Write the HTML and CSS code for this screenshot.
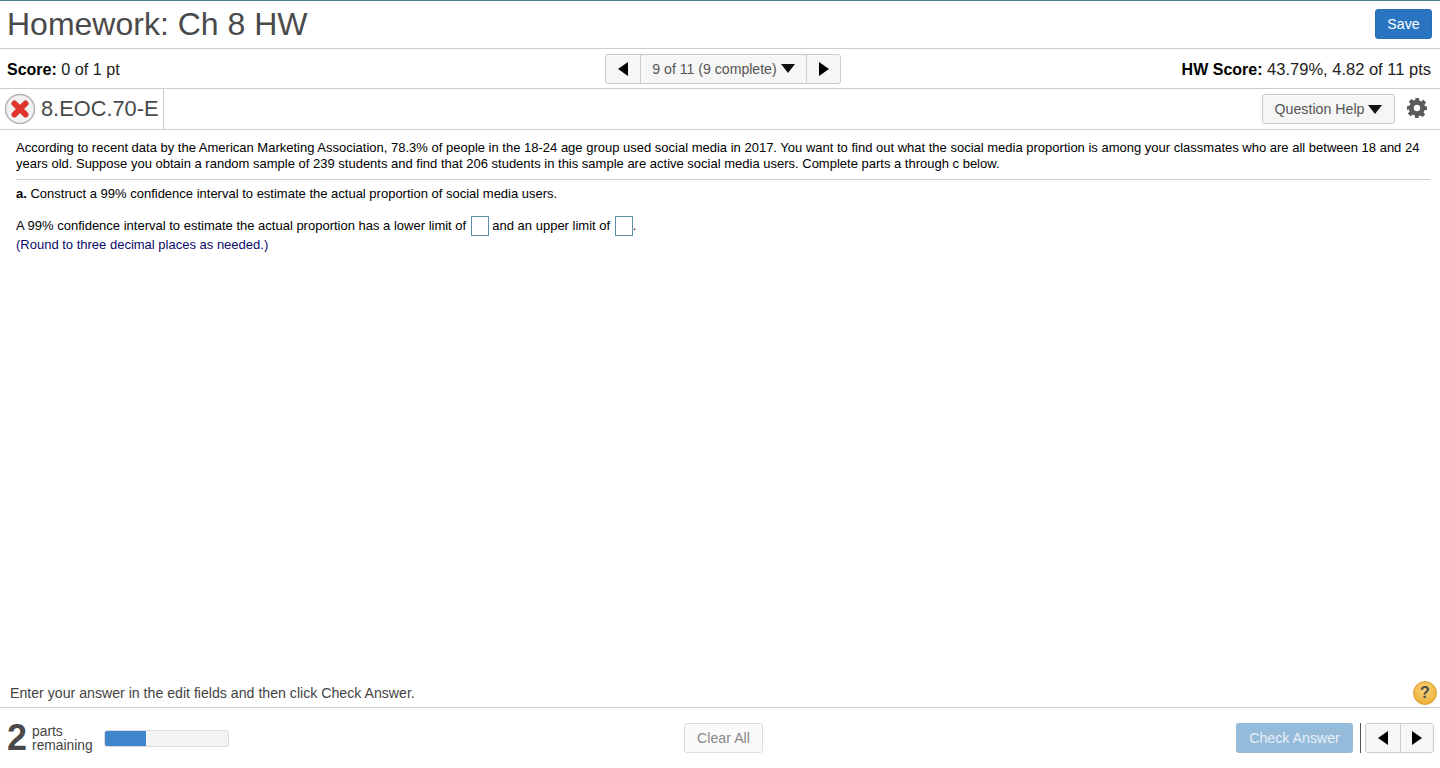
FILE: index.html
```html
<!DOCTYPE html>
<html lang="en">
<head>
  <meta charset="UTF-8" />
  <title>Homework: Ch 8 HW</title>
  <link rel="stylesheet" href="styles.css">
</head>
<body>

<header class="title-bar">
  <h1>Homework: Ch 8 HW</h1>
  <button class="btn btn-save">Save</button>
</header>

<div class="score-bar">
  <div class="score"><strong>Score:</strong> 0 of 1 pt</div>
  <div class="pager pager-main">
    <button class="pager-arrow"><span class="tri-left"></span></button>
    <button class="pager-label">9 of 11 (9 complete)<span class="tri-down"></span></button>
    <button class="pager-arrow"><span class="tri-right"></span></button>
  </div>
  <div class="hw-score"><strong>HW Score:</strong> 43.79%, 4.82 of 11 pts</div>
</div>

<div class="question-bar">
  <div class="question-id">
    <svg class="wrong-icon" width="32" height="32" viewBox="0 0 32 32">
      <circle cx="16" cy="16" r="14.5" fill="#f1f1f1" stroke="#b4b4b4" stroke-width="1.5"/>
      <path d="M10.5 10.5 L21.5 21.5 M21.5 10.5 L10.5 21.5" stroke="#dd352e" stroke-width="6" stroke-linecap="round"/>
    </svg>
    <span class="question-name">8.EOC.70-E</span>
  </div>
  <div class="question-tools">
    <button class="btn btn-help">Question Help<span class="tri-down"></span></button>
    <svg class="gear" width="22" height="22" viewBox="0 0 24 24">
      <path fill="#5a5a5a" fill-rule="evenodd" d="M10 1h4l.6 3.1 1.9.8 2.6-1.8 2.8 2.8-1.8 2.6.8 1.9L23 10v4l-3.1.6-.8 1.9 1.8 2.6-2.8 2.8-2.6-1.8-1.9.8L14 23h-4l-.6-3.1-1.9-.8-2.6 1.8-2.8-2.8 1.8-2.6-.8-1.9L1 14v-4l3.1-.6.8-1.9-1.8-2.6 2.8-2.8 2.6 1.8 1.9-.8zM12 8.5a3.5 3.5 0 1 0 0 7 3.5 3.5 0 0 0 0-7z"/>
    </svg>
  </div>
</div>

<main class="content">
  <p class="intro">According to recent data by the American Marketing Association, 78.3% of people in the 18-24 age group used social media in 2017. You want to find out what the social media proportion is among your classmates who are all between 18 and 24 years old. Suppose you obtain a random sample of 239 students and find that 206 students in this sample are active social media users. Complete parts a through c below.</p>
  <p class="part"><strong>a.</strong> Construct a 99% confidence interval to estimate the actual proportion of social media users.</p>
  <p class="answer">A 99% confidence interval to estimate the actual proportion has a lower limit of <span class="blank"></span> and an upper limit of <span class="blank"></span>.</p>
  <p class="hint">(Round to three decimal places as needed.)</p>
</main>

<div class="instruction-bar">
  <span>Enter your answer in the edit fields and then click Check Answer.</span>
  <span class="help-dot">?</span>
</div>

<footer class="action-bar">
  <div class="parts">
    <span class="parts-num">2</span>
    <span class="parts-text">parts<br>remaining</span>
    <div class="progress"><div class="progress-fill"></div></div>
  </div>
  <button class="btn btn-clear">Clear All</button>
  <div class="actions">
    <button class="btn btn-check">Check Answer</button>
    <span class="divider"></span>
    <div class="pager pager-small">
      <button class="pager-arrow"><span class="tri-left"></span></button>
      <button class="pager-arrow"><span class="tri-right"></span></button>
    </div>
  </div>
</footer>

</body>
</html>
```

FILE: styles.css
```css
* {
  box-sizing: border-box;
}

html, body {
  margin: 0;
  padding: 0;
  height: 100%;
  overflow: hidden;
}

body {
  display: flex;
  flex-direction: column;
  font-family: "Liberation Sans", Arial, sans-serif;
  color: #000;
  background: #fff;
}

button {
  font-family: inherit;
}

strong {
  font-weight: bold;
}

.title-bar {
  height: 49px;
  flex: none;
  display: flex;
  align-items: center;
  justify-content: space-between;
  padding: 0 8px 0 7px;
  border-top: 1px solid #4d7d96;
  border-bottom: 1px solid #ccc;
}

.title-bar h1 {
  margin: 0;
  font-size: 32px;
  font-weight: normal;
  color: #4a4a4a;
}

.btn {
  border-radius: 3px;
  font-size: 14.2px;
  cursor: pointer;
}

.btn-save {
  width: 57px;
  height: 30px;
  margin-bottom: 2px;
  padding: 0;
  background: #2a75c2;
  border: 1px solid #2a6fb5;
  color: #fff;
}

.score-bar {
  height: 40px;
  flex: none;
  display: grid;
  grid-template-columns: 1fr auto 1fr;
  align-items: center;
  padding: 0 9px 0 7px;
  border-bottom: 1px solid #ccc;
  font-size: 16.5px;
  color: #222;
}

.score, .hw-score {
  padding-top: 2px;
}

.score {
  font-size: 16.2px;
}

.score-bar strong {
  color: #000;
  font-size: 16px;
}

.hw-score {
  text-align: right;
}

.pager {
  display: flex;
  height: 30px;
  border: 1px solid #ccc;
  border-radius: 3px;
  background: #f6f6f6;
}

.pager-main {
  margin-left: 8px;
}

.pager button {
  background: none;
  border: none;
  padding: 0;
  display: flex;
  align-items: center;
  justify-content: center;
}

.pager-arrow {
  width: 34px;
}

.pager-arrow + .pager-label,
.pager-label + .pager-arrow,
.pager-arrow + .pager-arrow {
  border-left: 1px solid #ccc;
}

.pager-label {
  width: 166px;
  font-size: 14.1px;
  color: #555;
}

.tri-left, .tri-right, .tri-down {
  display: inline-block;
  width: 0;
  height: 0;
}

.tri-left {
  border-top: 7px solid transparent;
  border-bottom: 7px solid transparent;
  border-right: 10px solid #000;
}

.tri-right {
  border-top: 7px solid transparent;
  border-bottom: 7px solid transparent;
  border-left: 10px solid #000;
}

.tri-down {
  margin-left: 4px;
  border-left: 7px solid transparent;
  border-right: 7px solid transparent;
  border-top: 9px solid #111;
}

.question-bar {
  height: 41px;
  flex: none;
  display: flex;
  align-items: center;
  justify-content: space-between;
  padding: 0 12px 0 4px;
  border-bottom: 1px solid #ccc;
}

.question-id {
  display: flex;
  align-items: center;
  height: 100%;
  border-right: 1px solid #ccc;
  padding-right: 4px;
  gap: 5px;
}

.question-name {
  font-size: 21.8px;
  color: #4a4a4a;
}

.question-tools {
  display: flex;
  align-items: center;
  gap: 11px;
}

.btn-help {
  width: 133px;
  height: 30px;
  padding: 0;
  background: #f6f6f6;
  border: 1px solid #ccc;
  color: #555;
}

.gear {
  margin-bottom: 2px;
}

.content {
  flex: 1;
  padding: 10px 10px 0 16px;
  font-size: 13px;
  line-height: 16px;
}

.content p {
  margin: 0;
}

.intro {
  padding: 0 0 7px;
  border-bottom: 1px solid #ccc;
}

.content .part {
  margin: 6px 0 0;
}

.content .answer {
  margin-top: 13px;
  line-height: 21px;
}

.blank {
  display: inline-block;
  width: 17.5px;
  height: 20px;
  margin-left: 1.4px;
  border: 1px solid #5f8fa8;
  vertical-align: -5.6px;
}

.content .hint {
  margin-top: 1px;
  color: #0a0a6a;
}

.instruction-bar {
  height: 34px;
  flex: none;
  display: flex;
  align-items: center;
  justify-content: space-between;
  padding: 5px 3px 0 10px;
  border-bottom: 1px solid #ccc;
  font-size: 14.15px;
  color: #444;
}

.help-dot {
  width: 24px;
  height: 24px;
  border-radius: 50%;
  background: radial-gradient(circle at 50% 35%, #f8d376, #eeb23c 75%);
  border: 1px solid #d9a033;
  color: #4a4a4a;
  font-weight: bold;
  font-size: 16px;
  line-height: 22px;
  text-align: center;
}

.action-bar {
  height: 60px;
  flex: none;
  display: grid;
  grid-template-columns: 1fr auto 1fr;
  align-items: center;
  padding: 0 6px 0 7px;
}

.parts {
  display: flex;
  align-items: center;
}

.parts-num {
  font-size: 36px;
  font-weight: bold;
  color: #4a4a4a;
  margin-right: 5px;
}

.parts-text {
  padding-top: 2px;
  font-size: 13.8px;
  line-height: 14px;
  color: #444;
  margin-right: 11px;
}

.progress {
  width: 125px;
  height: 17px;
  background: #f3f3f3;
  border: 1px solid #ddd;
  border-radius: 3px;
  overflow: hidden;
}

.progress-fill {
  width: 33.6%;
  height: 100%;
  background: #3f85cb;
}

.btn-clear {
  width: 79px;
  height: 30px;
  margin-left: 6px;
  padding: 0;
  background: #fafafa;
  border: 1px solid #ddd;
  color: #888;
}

.actions {
  display: flex;
  align-items: center;
  justify-content: flex-end;
}

.btn-check {
  width: 117px;
  height: 30px;
  padding: 0;
  background: #95bbdb;
  border: none;
  color: #e8f0f7;
}

.divider {
  width: 1px;
  height: 30px;
  margin: 0 4px 0 7px;
  background: #555;
}

.pager-small .pager-arrow {
  width: 33.5px;
}
```
